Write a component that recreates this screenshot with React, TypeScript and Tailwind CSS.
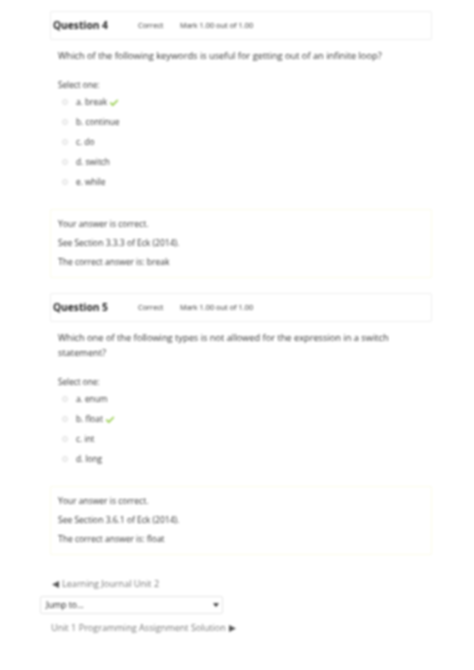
import { Check } from 'lucide-react'

interface QuestionProps {
  number: number
  text: string
  options: string[]
  correctIndex: number
  section: string
  answer: string
}

function Question({ number, text, options, correctIndex, section, answer }: QuestionProps) {
  return (
    <div>
      <div className="flex h-[29px] items-center rounded-[2px] border border-[#eeeeee] pl-[2px]">
        <span className="w-[85px] text-[10.2px] font-bold text-[#222222]">Question {number}</span>
        <span className="w-[42px] text-[7.4px] text-[#333333]">Correct</span>
        <span className="text-[7.4px] text-[#333333]">Mark 1.00 out of 1.00</span>
      </div>
      <div className="pl-2 pr-8 pt-[8px]">
        <p className="text-[9.25px] leading-[15px] text-[#333333]">{text}</p>
        <p className="mt-[16px] text-[8.2px] leading-[12px] text-[#333333]">Select one:</p>
        <div className="mt-[1px]">
          {options.map((option, i) => (
            <div key={option} className="flex h-[20px] items-center">
              <span className="ml-[4px] mr-[8px] h-[6px] w-[6px] rounded-full border border-[#dddddd] bg-[#f8f8f8]"></span>
              <span className="text-[8.3px] text-[#333333]">{option}</span>
              {i === correctIndex && <Check className="ml-[2px] mt-[2px] h-[10px] w-[10px] text-[#96cc4a]" strokeWidth={4} />}
            </div>
          ))}
        </div>
      </div>
      <div className="mt-[17px] flex h-[69px] flex-col gap-[7px] rounded-[2px] border border-[#fbfbe8] pl-[7px] pt-[8px] text-[8.5px] leading-[12px] text-[#333333]">
        <p>Your answer is correct.</p>
        <p>See Section {section} of Eck (2014).</p>
        <p>The correct answer is: {answer}</p>
      </div>
    </div>
  )
}

export default function App() {
  return (
    <div className="h-[670px] w-[474px] overflow-hidden bg-white font-['Open_Sans',sans-serif] blur-[1.2px]">
      <div className="flex flex-col gap-[15px] pl-[50px] pr-[42px] pt-[11px]">
        <Question
          number={4}
          text="Which of the following keywords is useful for getting out of an infinite loop?"
          options={['a. break', 'b. continue', 'c. do', 'd. switch', 'e. while']}
          correctIndex={0}
          section="3.3.3"
          answer="break"
        />
        <Question
          number={5}
          text="Which one of the following types is not allowed for the expression in a switch statement?"
          options={['a. enum', 'b. float', 'c. int', 'd. long']}
          correctIndex={1}
          section="3.6.1"
          answer="float"
        />
      </div>
      <div className="mt-[23px] pl-[40px] text-[9.1px] text-[#777777]">
        <p className="flex items-center gap-[3px] pl-[12px] leading-[12px]">
          <svg viewBox="0 0 7 7" className="h-[7px] w-[7px]">
            <path d="M0 3.5 L7 0 L7 7 Z" fill="#555555" />
          </svg>
          Learning Journal Unit 2
        </p>
        <div className="mt-[6px] flex h-[18px] w-[183px] items-center justify-between rounded-[2px] border border-[#e5e5e5] bg-white pl-[5px] pr-[3px] text-[8.5px] text-[#222222]">
          <span>Jump to...</span>
          <svg viewBox="0 0 8 5" className="h-[4px] w-[6px]">
            <path d="M0 0 L8 0 L4 5 Z" fill="#333333" />
          </svg>
        </div>
        <p className="mt-[8px] flex items-center gap-[3px] pl-[11px] leading-[12px]">
          Unit 1 Programming Assignment Solution
          <svg viewBox="0 0 7 7" className="h-[7px] w-[7px]">
            <path d="M7 3.5 L0 0 L0 7 Z" fill="#555555" />
          </svg>
        </p>
      </div>
    </div>
  )
}
